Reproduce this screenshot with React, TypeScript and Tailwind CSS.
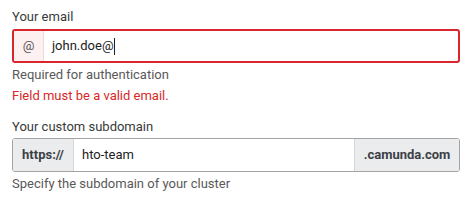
import React from 'react';

const font = { fontFamily: 'Roboto, "Noto Sans", sans-serif' };

export default function App() {
  return (
    <div className="w-[474px] h-[206px] bg-white pt-[8px] pl-3 text-[13px]" style={font}>
      {/* email field */}
      <div className="w-[448px]">
        <label className="block leading-[18px] text-[#393939] mb-[3px]">Your email</label>
        <div className="flex h-[34px] rounded-[3px] border-2 border-[#d9262e] overflow-hidden">
          <div className="w-[30px] flex items-center justify-center bg-[#fdf0f1] text-[#555] border-r border-[#f3d6d8]">@</div>
          <div className="flex-1 flex items-center pl-[8px] text-[#222]">
            <span>john.doe@</span>
            <span className="w-px h-[17px] bg-[#222]" />
          </div>
        </div>
        <p className="mt-[3px] leading-[18px] text-[#595959]">Required for authentication</p>
        <p className="mt-[3px] leading-[18px] text-[#d72727]">Field must be a valid email.</p>
      </div>

      {/* subdomain field */}
      <div className="w-[448px] mt-[13px]">
        <label className="block leading-[18px] text-[#393939] mb-[2px]">Your custom subdomain</label>
        <div className="flex h-[34px] rounded-[3px] border border-[#a3a3a3] overflow-hidden">
          <div className="w-[61px] flex items-center justify-center bg-[#ebecee] font-bold text-[#3c3f45] border-r border-[#d5d6d8]">https://</div>
          <div className="flex-1 flex items-center pl-[8px] text-[#222]">hto-team</div>
          <div className="w-[105px] flex items-center justify-center bg-[#ebecee] font-bold text-[#3c3f45] border-l border-[#d5d6d8]">.camunda.com</div>
        </div>
        <p className="mt-[3px] leading-[18px] text-[#595959]">Specify the subdomain of your cluster</p>
      </div>
    </div>
  );
}
